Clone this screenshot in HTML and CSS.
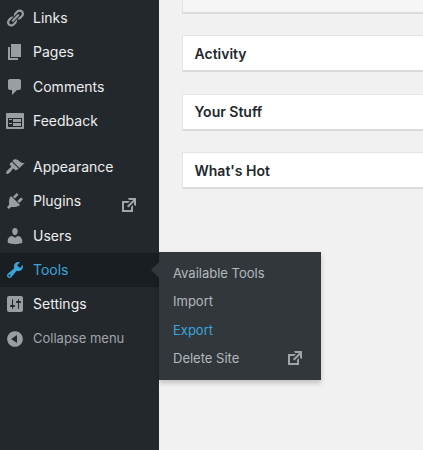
FILE: index.html
```html
<!DOCTYPE html>
<html lang="en">
<head>
<meta charset="utf-8">
<title>Tools</title>
<link rel="stylesheet" href="styles.css">
</head>
<body>
<div class="page">
  <nav class="sidebar">
    <ul class="menu">
      <li class="item"><svg class="icon" viewBox="0 0 20 20"><path d="M17.74 2.76c1.68 1.69 1.68 4.41 0 6.1l-1.53 1.52c-1.12 1.12-2.7 1.47-4.14 1.09l2.62-2.61.76-.77.76-.76c.84-.84.84-2.2 0-3.04-.84-.85-2.2-.85-3.04 0l-.77.76-3.38 3.38c-.37-1.44-.02-3.02 1.1-4.14l1.52-1.53c1.69-1.68 4.42-1.68 6.1 0zM8.59 13.43l5.34-5.34c.42-.42.42-1.1 0-1.52-.44-.43-1.13-.39-1.53 0l-5.33 5.34c-.42.42-.42 1.1 0 1.52.44.43 1.13.39 1.52 0zm-.76 2.29l4.14-4.15c.38 1.44.03 3.02-1.09 4.14l-1.52 1.53c-1.69 1.68-4.41 1.68-6.1 0-1.68-1.68-1.68-4.42 0-6.1l1.53-1.52c1.12-1.12 2.7-1.47 4.14-1.1l-4.14 4.15c-.85.84-.85 2.2 0 3.05.84.84 2.2.84 3.04 0z"/></svg><span class="label">Links</span></li>
      <li class="item"><svg class="icon" viewBox="0 0 20 20"><path d="M6 15V2h10v13H6zm-1 1h8v2H3V5h2v11z"/></svg><span class="label">Pages</span></li>
      <li class="item"><svg class="icon" viewBox="0 0 20 20"><path d="M5 2h9c1.1 0 2 .9 2 2v7c0 1.1-.9 2-2 2h-2l-5 5v-5H5c-1.1 0-2-.9-2-2V4c0-1.1.9-2 2-2z"/></svg><span class="label">Comments</span></li>
      <li class="item"><svg class="icon" viewBox="0 0 20 20"><path d="M2 2h16c.55 0 1 .45 1 1v14c0 .55-.45 1-1 1H2c-.55 0-1-.45-1-1V3c0-.55.45-1 1-1zm15 14V7H3v9h14zM4 8v1h3V8H4zm4 0v3h8V8H8zm-4 4v1h3v-1H4zm4 0v3h8v-3H8z"/></svg><span class="label">Feedback</span></li>
      <li class="item item-group"><svg class="icon" viewBox="0 0 20 20"><path d="M14.48 11.06L7.41 3.99l1.5-1.5c.5-.56 2.3-.47 3.51.32 1.21.8 1.43 1.28 2.91 2.1 1.18.64 2.45 1.26 4.45.85zm-.71.71L6.7 4.7 4.93 6.47c-.39.39-.39 1.02 0 1.41l1.06 1.06c.39.39.39 1.03 0 1.42-.6.6-1.43 1.11-2.21 1.69-.35.26-.7.53-1.01.84-1.43 1.43-2.15 3.01-1.4 3.76.75.75 2.33.03 3.76-1.4.31-.31.58-.66.84-1.01.58-.78 1.09-1.61 1.69-2.21.39-.39 1.03-.39 1.42 0l1.06 1.06c.39.39 1.02.39 1.41 0z"/></svg><span class="label">Appearance</span></li>
      <li class="item"><svg class="icon" viewBox="0 0 20 20"><path d="M13.11 4.36L9.87 7.6 8 5.73l3.24-3.24c.35-.34 1.05-.2 1.56.32.52.51.66 1.21.31 1.55zm-8 1.77l.91-1.12 9.01 9.01-1.19.84c-.71.71-2.63 1.16-3.82 1.16H6.14L4.9 17.26c-.59.59-1.54.59-2.12 0-.59-.58-.59-1.53 0-2.12l1.24-1.24v-3.88c0-1.13.4-3.19 1.09-3.89zm7.26 3.97l3.24-3.24c.34-.35 1.04-.21 1.55.31.52.51.66 1.21.31 1.55l-3.24 3.25z"/></svg><span class="label">Plugins</span><svg class="ext ext-plugins" viewBox="0 0 20 20"><path d="M9 3h8v8l-2-1V6.92l-5.6 5.59-1.41-1.41L14.08 5H10zm3 12v-3l2-2v7H3V6h8L9 8H5v7h7z"/></svg></li>
      <li class="item"><svg class="icon" viewBox="0 0 20 20"><path d="M10 9.25c-2.27 0-2.73-3.44-2.73-3.44C7 4.02 7.82 2 9.97 2c2.16 0 2.98 2.02 2.71 3.81 0 0-.41 3.44-2.68 3.44zm0 2.57L12.72 10c2.39 0 4.52 2.33 4.52 4.53v2.49s-3.65 1.13-7.24 1.13c-3.65 0-7.24-1.13-7.24-1.13v-2.49c0-2.25 1.94-4.48 4.47-4.48z"/></svg><span class="label">Users</span></li>
      <li class="item item-active"><svg class="icon" viewBox="0 0 20 20"><path d="M16.68 9.77c-1.34 1.34-3.3 1.67-4.95.99l-5.41 6.52c-.99.99-2.59.99-3.58 0s-.99-2.59 0-3.57l6.52-5.42c-.68-1.65-.35-3.61.99-4.95 1.28-1.28 3.12-1.62 4.72-1.06l-2.89 2.89 2.82 2.82 2.86-2.87c.53 1.58.18 3.39-1.08 4.65zM3.81 16.21c.4.39 1.04.39 1.43 0 .4-.4.4-1.04 0-1.43-.39-.4-1.03-.4-1.43 0-.39.39-.39 1.03 0 1.43z"/></svg><span class="label">Tools</span>
        <div class="flyout">
          <span class="flyout-arrow"></span>
          <a class="flyout-link">Available Tools</a>
          <a class="flyout-link">Import</a>
          <a class="flyout-link flyout-current">Export</a>
          <a class="flyout-link">Delete Site<svg class="ext ext-flyout" viewBox="0 0 20 20"><path d="M9 3h8v8l-2-1V6.92l-5.6 5.59-1.41-1.41L14.08 5H10zm3 12v-3l2-2v7H3V6h8L9 8H5v7h7z"/></svg></a>
        </div>
      </li>
      <li class="item"><svg class="icon" viewBox="0 0 20 20"><path fill-rule="evenodd" d="M18 16V4c0-1.1-.9-2-2-2H4c-1.1 0-2 .9-2 2v12c0 1.1.9 2 2 2h12c1.1 0 2-.9 2-2zM8 11h1c.55 0 1 .45 1 1s-.45 1-1 1H8v1.5c0 .28-.22.5-.5.5s-.5-.22-.5-.5V13H6c-.55 0-1-.45-1-1s.45-1 1-1h1V5.5c0-.28.22-.5.5-.5s.5.22.5.5V11zm5-2h-1c-.55 0-1-.45-1-1s.45-1 1-1h1V5.5c0-.28.22-.5.5-.5s.5.22.5.5V7h1c.55 0 1 .45 1 1s-.45 1-1 1h-1v5.5c0 .28-.22.5-.5.5s-.5-.22-.5-.5V9z"/></svg><span class="label">Settings</span></li>
      <li class="item item-collapse"><svg class="icon" viewBox="0 0 20 20"><path fill-rule="evenodd" d="M10 2.16c4.33 0 7.84 3.51 7.84 7.84s-3.51 7.84-7.84 7.84S2.16 14.33 2.16 10 5.67 2.16 10 2.16zM12 13.88V6.12L6.18 10z"/></svg><span class="label">Collapse menu</span></li>
    </ul>
  </nav>
  <main class="content">
    <section class="card card-cut"></section>
    <section class="card"><h2 class="card-title">Activity</h2></section>
    <section class="card"><h2 class="card-title">Your Stuff</h2></section>
    <section class="card"><h2 class="card-title">What's Hot</h2></section>
  </main>
</div>
</body>
</html>
```

FILE: styles.css
```css
* { box-sizing: border-box; }

html, body {
  margin: 0;
  height: 100%;
  overflow: hidden;
}

body {
  background: #f1f1f1;
  font-family: Inter, "Liberation Sans", sans-serif;
  -webkit-font-smoothing: antialiased;
}

.page {
  display: flex;
  height: 450px;
}

.sidebar {
  flex: 0 0 159px;
  background: #23282d;
  padding-top: 1px;
}

.menu {
  list-style: none;
  margin: 0;
  padding: 0;
}

.item {
  position: relative;
  display: flex;
  align-items: center;
  gap: 8px;
  height: 34.33px;
  padding-left: 5px;
  color: #eeeeee;
  font-size: 14px;
}

.label { margin-bottom: 1px; }

.item-group { margin-top: 11.5px; }

.icon {
  flex: none;
  width: 20px;
  height: 20px;
  fill: #9a9ea2;
}

.ext { fill: #a0a5aa; flex: none; }

.ext-plugins {
  width: 20px;
  height: 20px;
  margin-left: auto;
  margin-right: 20px;
  margin-top: 8px;
}

.item-active {
  background: #191e23;
  color: #38a6d9;
}

.item-active .icon { fill: #38a6d9; }

.item-collapse { color: #a0a5aa; font-size: 13px; }

.flyout {
  position: absolute;
  left: 159px;
  top: -1px;
  width: 162px;
  height: 128px;
  padding: 7px 0;
  background: #32373c;
  box-shadow: 0 3px 5px rgba(0, 0, 0, 0.2);
  z-index: 2;
}

.flyout-arrow {
  position: absolute;
  left: -8px;
  top: 10px;
  border-style: solid;
  border-width: 8px 8px 8px 0;
  border-color: transparent #32373c transparent transparent;
}

.flyout-link {
  display: flex;
  align-items: center;
  justify-content: space-between;
  height: 28.3px;
  padding: 0 16.5px 0 14px;
  color: #b4b9be;
  font-size: 13px;
}

.flyout-current { color: #38a6d9; }

.ext-flyout {
  width: 20px;
  height: 20px;
}

.content {
  flex: 1;
  min-width: 0;
  padding-left: 23px;
  display: flex;
  flex-direction: column;
  gap: 21.5px;
}

.card {
  height: 37px;
  background: #ffffff;
  border: 1px solid #e2e4e7;
  border-right: 0;
  border-bottom: 2px solid #d9dbde;
  display: flex;
  align-items: center;
  padding-left: 11.5px;
}

.card-cut {
  height: 13.5px;
  background: #f5f5f5;
  border-top: 0;
}

.card-title {
  margin: 0;
  font-size: 14px;
  font-weight: 600;
  color: #23282d;
}
```
